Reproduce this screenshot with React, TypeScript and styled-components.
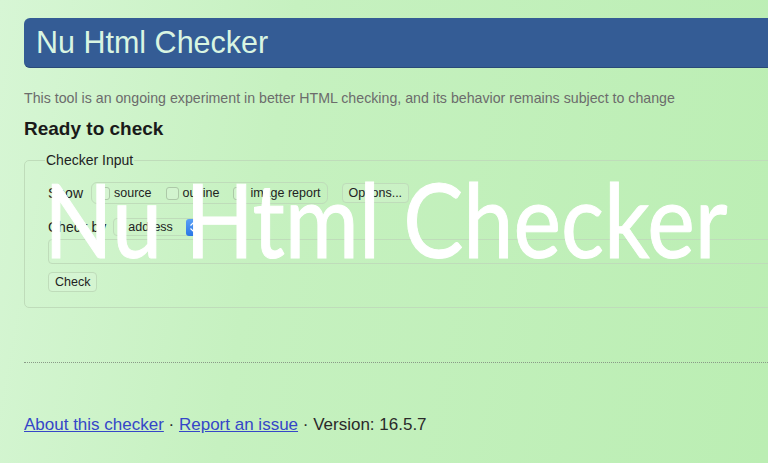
import * as React from 'react';
import styled, { createGlobalStyle } from 'styled-components';

const GlobalStyle = createGlobalStyle`
    html, body {
        margin: 0;
        padding: 0;
        overflow: hidden;
    }
    body {
        width: 768px;
        height: 463px;
        font-family: "Liberation Sans", Arial, sans-serif;
        background: linear-gradient(100deg, #d7f6d5 0%, #c6f1c0 35%, #bbeeb3 100%);
    }
`;

const Page = styled.div`
    position: relative;
    width: 1000px;
    height: 463px;
    padding: 18px 0 0 24px;
    box-sizing: border-box;
`;

const Header = styled.h1`
    margin: 0;
    height: 50px;
    display: flex;
    align-items: center;
    padding-left: 12px;
    background: #345c95;
    border-bottom: 1px solid #2a4a78;
    border-radius: 6px 0 0 6px;
    color: #d9f5e2;
    font-weight: normal;
    font-size: 30.5px;
    box-sizing: border-box;
`;

const Intro = styled.p`
    margin: 22px 0 0;
    font-size: 14.2px;
    color: #6c6c6c;
`;

const Status = styled.h2`
    margin: 12px 0 0;
    font-size: 19px;
    font-weight: bold;
    color: #1a1a1a;
`;

const Fieldset = styled.fieldset`
    margin: 12px 0 0;
    padding: 6px 0 14px 23px;
    border: 1px solid #bfdcba;
    border-radius: 5px;
    font-size: 13px;
    color: #222;
`;

const Legend = styled.legend`
    margin-left: -3px;
    padding: 0 1px;
    font-size: 14px;
    color: #222;
`;

const Row = styled.div<{ $gap?: number; $top?: number }>`
    display: flex;
    align-items: center;
    gap: ${(p) => p.$gap ?? 8}px;
    height: 22px;
    margin-top: ${(p) => p.$top ?? 0}px;
`;

const Label = styled.span`
    font-size: 14px;
    color: #222;
`;

const Group = styled.div`
    display: flex;
    align-items: center;
    gap: 14px;
    height: 20px;
    padding: 0 6px 0 5px;
    border: 1px solid #bfdcba;
    border-radius: 6px;
    margin-right: 6px;
`;

const Opt = styled.label`
    display: flex;
    align-items: center;
    gap: 4px;
    font-size: 12.5px;
    color: #222;
`;

const Box = styled.span`
    width: 11px;
    height: 11px;
    border: 1px solid #adc9a8;
    border-radius: 3px;
    background: rgba(255, 255, 255, 0.15);
`;

const Button = styled.button`
    height: 20px;
    padding: 0 6px;
    font-family: inherit;
    font-size: 12.5px;
    color: #222;
    background: rgba(255, 255, 255, 0.12);
    border: 1px solid #bfdcba;
    border-radius: 4px;
`;

const Select = styled.div`
    display: flex;
    align-items: center;
    justify-content: space-between;
    width: 88px;
    height: 18px;
    padding-left: 14px;
    box-sizing: border-box;
    border: 1px solid #bfdcba;
    border-radius: 4px;
    font-size: 12.5px;
`;

const Stepper = styled.span`
    display: flex;
    align-items: center;
    justify-content: center;
    width: 14px;
    height: 17px;
    background: linear-gradient(#5aa0f5, #2a76e6);
    border-radius: 3px;
`;

const Field = styled.div`
    height: 23px;
    margin-top: 1px;
    border: 1px solid #bfdcba;
    border-radius: 4px;
`;

const Rule = styled.hr`
    margin: 54px 0 0;
    border: 0;
    border-top: 1px dotted #8a9a88;
`;

const Footer = styled.p`
    margin: 52px 0 0;
    font-size: 17px;
    color: #2a2a2a;
`;

const Link = styled.a`
    color: #3546c8;
    text-decoration: underline;
`;

const Overlay = styled.div`
    position: absolute;
    left: 44px;
    top: 157px;
    font-family: Lato, "Noto Sans", sans-serif;
    font-size: 103px;
    font-weight: 400;
    color: #ffffff;
    white-space: nowrap;
    line-height: 1.2;
    transform: scaleX(0.874);
    transform-origin: left top;
    -webkit-text-stroke: 1px #ffffff;
`;

export default function App() {
    return (
        <Page>
            <GlobalStyle />
            <Header>Nu Html Checker</Header>
            <Intro>
                This tool is an ongoing experiment in better HTML checking, and its behavior remains subject to change
            </Intro>
            <Status>Ready to check</Status>
            <Fieldset>
                <Legend>Checker Input</Legend>
                <Row $top={8}>
                    <Label>Show</Label>
                    <Group>
                        <Opt><Box />source</Opt>
                        <Opt><Box />outline</Opt>
                        <Opt><Box />image report</Opt>
                    </Group>
                    <Button>Options...</Button>
                </Row>
                <Row $gap={7} $top={12}>
                    <Label>Check by</Label>
                    <Select>
                        address
                        <Stepper>
                            <svg width="8" height="12" viewBox="0 0 8 12">
                                <path d="M1.5 4.5 L4 2 L6.5 4.5 M1.5 7.5 L4 10 L6.5 7.5" stroke="#fff" strokeWidth="1.2" fill="none" />
                            </svg>
                        </Stepper>
                    </Select>
                </Row>
                <Field />
                <Row $top={7}>
                    <Button>Check</Button>
                </Row>
            </Fieldset>
            <Rule />
            <Footer>
                <Link href="#">About this checker</Link> · <Link href="#">Report an issue</Link> · Version: 16.5.7
            </Footer>
            <Overlay>Nu Html Checker</Overlay>
        </Page>
    );
}
